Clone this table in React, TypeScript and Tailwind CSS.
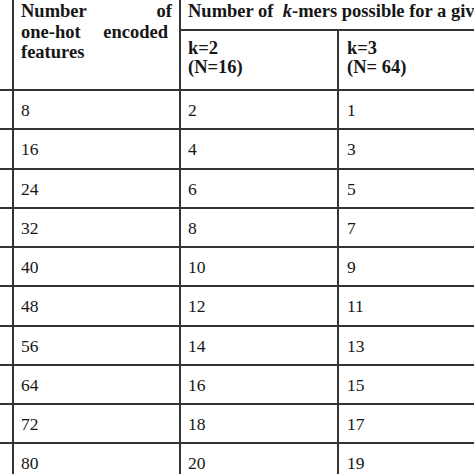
import React from "react";

const rows = Array.from({ length: 10 }, (_, i) => i + 1);

export default function App() {
  return (
    <div className="w-[474px] h-[474px] overflow-hidden bg-white text-[#161616] font-['Liberation_Serif',serif]">
      <div className="flex h-[89px]">
        <div className="w-[14px] shrink-0 border-r-2 border-[#333]" />
        <div className="w-[167px] shrink-0 border-r-2 border-[#333] pl-[7px] pr-[7px] pt-[1px] text-[18.5px] font-bold leading-[20.5px]">
          <div className="flex justify-between">
            <span>Number</span>
            <span>of</span>
          </div>
          <div className="flex justify-between pr-[4px]">
            <span>one-hot</span>
            <span>encoded</span>
          </div>
          <div>features</div>
        </div>
        <div className="flex min-w-0 flex-1 flex-col">
          <div className="h-[31px] shrink-0 overflow-hidden whitespace-nowrap border-b-2 border-[#333] pl-[7px] pt-[1px] text-[18.5px] font-bold leading-[20px]">
            Number of&nbsp; <i>k</i>-mers possible for a given sequence length
          </div>
          <div className="flex flex-1">
            <div className="w-[158px] shrink-0 border-r-2 border-[#333] pl-[7px] pt-[8px] text-[18.5px] font-bold leading-[19px]">
              <div>k=2</div>
              <div>(N=16)</div>
            </div>
            <div className="flex-1 pl-[8px] pt-[8px] text-[18.5px] font-bold leading-[19px]">
              <div>k=3</div>
              <div>(N= 64)</div>
            </div>
          </div>
        </div>
      </div>
      {rows.map((i) => (
        <div key={i} className="flex h-[39.25px] border-t-2 border-[#333] text-[17.5px] leading-[20px]">
          <div className="w-[14px] shrink-0 border-r-2 border-[#333]" />
          <div className="w-[167px] shrink-0 border-r-2 border-[#333] pl-[7px] pt-[9px]">{8 * i}</div>
          <div className="w-[158px] shrink-0 border-r-2 border-[#333] pl-[7px] pt-[9px]">{2 * i}</div>
          <div className="flex-1 pl-[8px] pt-[9px]">{2 * i - 1}</div>
        </div>
      ))}
    </div>
  );
}
